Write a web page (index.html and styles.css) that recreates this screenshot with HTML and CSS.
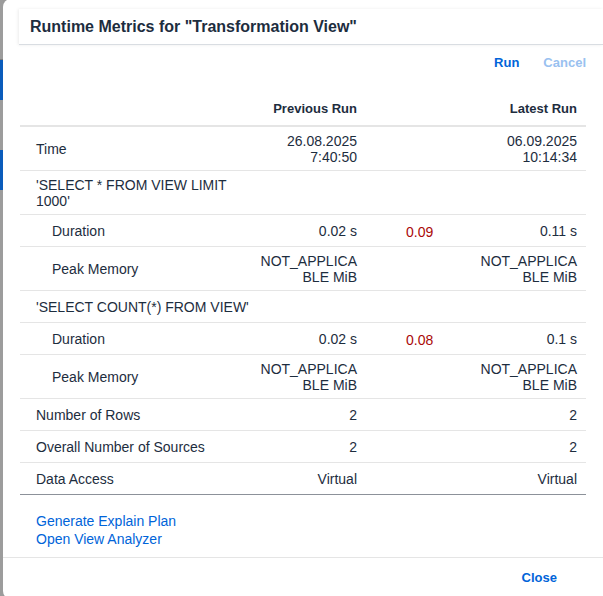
FILE: index.html
```html
<!DOCTYPE html>
<html lang="en">
<head>
<meta charset="utf-8">
<title>Runtime Metrics</title>
<link rel="stylesheet" href="styles.css">
</head>
<body>
<div class="page">
  <div class="backdrop">
    <div class="bd-gray bd-top"></div>
    <div class="bd-blue"></div>
    <div class="bd-gray bd-mid"></div>
    <div class="bd-blue"></div>
    <div class="bd-gray bd-rest"></div>
  </div>
  <div class="dialog">
    <header class="dlg-header">
      <h1 class="dlg-title">Runtime Metrics for "Transformation View"</h1>
    </header>
    <div class="toolbar">
      <button class="btn btn-run">Run</button>
      <button class="btn btn-cancel" disabled>Cancel</button>
    </div>
    <div class="metrics">
      <div class="row row-head">
        <div class="cell"></div>
        <div class="cell num">Previous Run</div>
        <div class="cell"></div>
        <div class="cell num">Latest Run</div>
      </div>
      <div class="row tall">
        <div class="cell label">Time</div>
        <div class="cell num">26.08.2025<br>7:40:50</div>
        <div class="cell"></div>
        <div class="cell num">06.09.2025<br>10:14:34</div>
      </div>
      <div class="row tall">
        <div class="cell label">'SELECT * FROM VIEW LIMIT<br>1000'</div>
        <div class="cell"></div>
        <div class="cell"></div>
        <div class="cell"></div>
      </div>
      <div class="row">
        <div class="cell label sub">Duration</div>
        <div class="cell num">0.02 s</div>
        <div class="cell diff">0.09</div>
        <div class="cell num">0.11 s</div>
      </div>
      <div class="row tall">
        <div class="cell label sub">Peak Memory</div>
        <div class="cell num">NOT_APPLICA<br>BLE MiB</div>
        <div class="cell"></div>
        <div class="cell num">NOT_APPLICA<br>BLE MiB</div>
      </div>
      <div class="row">
        <div class="cell label">'SELECT COUNT(*) FROM VIEW'</div>
        <div class="cell"></div>
        <div class="cell"></div>
        <div class="cell"></div>
      </div>
      <div class="row">
        <div class="cell label sub">Duration</div>
        <div class="cell num">0.02 s</div>
        <div class="cell diff">0.08</div>
        <div class="cell num">0.1 s</div>
      </div>
      <div class="row tall">
        <div class="cell label sub">Peak Memory</div>
        <div class="cell num">NOT_APPLICA<br>BLE MiB</div>
        <div class="cell"></div>
        <div class="cell num">NOT_APPLICA<br>BLE MiB</div>
      </div>
      <div class="row">
        <div class="cell label">Number of Rows</div>
        <div class="cell num">2</div>
        <div class="cell"></div>
        <div class="cell num">2</div>
      </div>
      <div class="row">
        <div class="cell label">Overall Number of Sources</div>
        <div class="cell num">2</div>
        <div class="cell"></div>
        <div class="cell num">2</div>
      </div>
      <div class="row row-last">
        <div class="cell label">Data Access</div>
        <div class="cell num">Virtual</div>
        <div class="cell"></div>
        <div class="cell num">Virtual</div>
      </div>
    </div>
    <div class="links">
      <a class="link" href="#">Generate Explain Plan</a>
      <a class="link" href="#">Open View Analyzer</a>
    </div>
    <div class="spacer"></div>
    <footer class="dlg-footer">
      <button class="btn btn-close">Close</button>
    </footer>
  </div>
</div>
</body>
</html>
```

FILE: styles.css
```css
* { box-sizing: border-box; }

html, body {
  margin: 0;
  padding: 0;
  height: 100%;
}

body {
  background: #9a9a9a;
  font-family: "Liberation Sans", Arial, sans-serif;
  font-size: 14px;
  color: #1d2d3e;
  overflow: hidden;
}

.page {
  display: flex;
  height: 596px;
}

.backdrop {
  width: 3px;
  display: flex;
  flex-direction: column;
  flex: none;
}
.bd-gray { background: #9c9c9c; }
.bd-top { height: 60px; border-bottom: 1px solid #7d7d7d; }
.bd-mid { height: 50px; }
.bd-rest { flex: 1; }
.bd-blue { height: 40px; background: #0b5cbb; }

.dialog {
  flex: 1;
  background: #ffffff;
  border-radius: 8px;
  display: flex;
  flex-direction: column;
  margin-right: -8px;
  padding-right: 8px;
  height: 600px;
  margin-top: -1px;
  padding-top: 1px;
}

.dlg-header {
  margin: 9px 0 0 16px;
  height: 36px;
  display: flex;
  align-items: center;
  padding-left: 11px;
  background: #fff;
  border-bottom: 1px solid #d9dde2;
  box-shadow: -1px 0 3px rgba(0, 0, 0, 0.08);
}

.dlg-title {
  margin: 0;
  font-size: 16px;
  font-weight: bold;
  color: #1d2d3e;
}

.toolbar {
  height: 34px;
  display: flex;
  justify-content: flex-end;
  align-items: center;
  gap: 24px;
  padding-right: 17px;
}

.btn {
  font-family: "Liberation Sans", Arial, sans-serif;
  font-size: 13px;
  font-weight: bold;
  background: none;
  border: none;
  padding: 0;
  color: #0064d9;
}
.btn-cancel { color: #99c1f0; }

.metrics {
  margin: 16px 17px 0 17px;
}

.row {
  display: grid;
  grid-template-columns: 230px 116px 104px 116px;
  min-height: 32px;
  border-bottom: 1px solid #e5e5e5;
  align-items: center;
}
.row.tall { min-height: 44px; }

.row-head {
  border-bottom: 2px solid #e5e5e5;
  font-weight: bold;
  font-size: 13px;
  min-height: 32px;
}
.row-head .cell { padding-bottom: 2px; }

.row-last { border-bottom: 1px solid #8c9199; }

.cell {
  line-height: 16px;
  padding: 0 9px 0 16px;
  white-space: nowrap;
}
.cell.sub { padding-left: 32px; }
.num {
  text-align: right;
  padding-left: 2px;
}
.diff {
  color: #aa0808;
  padding-left: 40px;
  padding-top: 3px;
}

.links {
  display: flex;
  flex-direction: column;
  align-items: flex-start;
  padding: 17px 0 0 33px;
}
.link {
  color: #0064d9;
  text-decoration: none;
  line-height: 18px;
}

.spacer { flex: 1; max-height: 9px; }

.dlg-footer {
  border-top: 1px solid #e5e5e5;
  height: 40px;
  display: flex;
  justify-content: flex-end;
  align-items: center;
  padding-right: 46px;
}
```
